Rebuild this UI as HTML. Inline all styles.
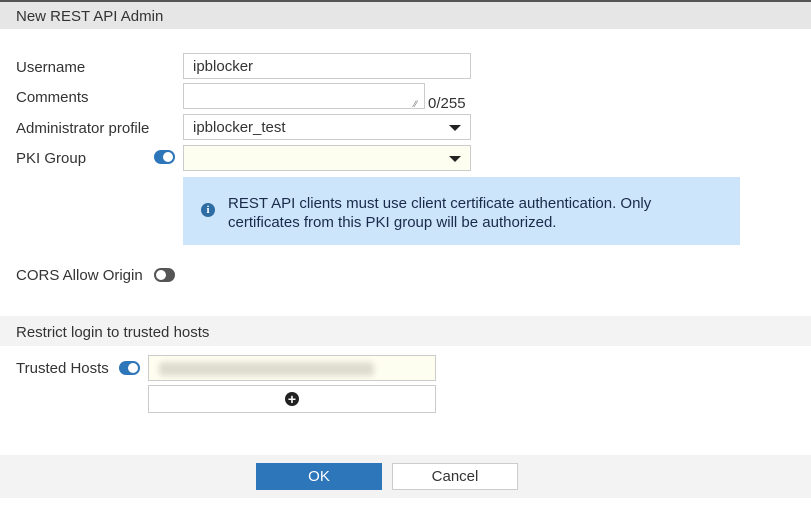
<!DOCTYPE html>
<html><head><meta charset="utf-8"><style>
*{box-sizing:border-box;margin:0;padding:0}
body{width:811px;height:531px;background:#fff;font-family:"Liberation Sans",sans-serif;font-size:15px;color:#333;position:relative;overflow:hidden}
.a{position:absolute}
.hdr{left:0;top:0;width:811px;height:29px;background:#e6e6e6;border-top:2px solid #555;padding:6px 16px;font-size:15px}
.lbl{left:16px}
.inp{border:1px solid #ccc;background:#fff;padding:4px 9px;font-size:15px;height:26px}
.tog{width:21px;height:14px;border-radius:7px;background:#2d76b9}
.tog::after{content:"";position:absolute;right:2px;top:2px;width:10px;height:10px;border-radius:50%;background:#fff}
.tog.off{background:#555}
.tog.off::after{right:auto;left:2px}
.caret{position:absolute;right:9px;top:10px;width:0;height:0;border-left:6px solid transparent;border-right:6px solid transparent;border-top:6px solid #222}
</style></head><body>
<div class="a hdr">New REST API Admin</div>

<div class="a lbl" style="top:59px">Username</div>
<div class="a inp" style="left:183px;top:53px;width:288px">ipblocker</div>

<div class="a lbl" style="top:89px">Comments</div>
<div class="a inp" style="left:183px;top:83px;width:242px"></div>
<div class="a" style="left:414px;top:99px;font-size:9px;color:#777">⁄⁄</div>
<div class="a" style="left:428px;top:95px">0/255</div>

<div class="a lbl" style="top:120px">Administrator profile</div>
<div class="a inp" style="left:183px;top:114px;width:288px">ipblocker_test<span class="caret"></span></div>

<div class="a lbl" style="top:150px">PKI Group</div>
<div class="a tog" style="left:154px;top:150px"></div>
<div class="a inp" style="left:183px;top:145px;width:288px;background:#fefef0"><span class="caret"></span></div>

<div class="a" style="left:183px;top:177px;width:557px;height:68px;background:#cce5fb;color:#1a2a4a;padding:17px 0 0 45px;line-height:19px">REST API clients must use client certificate authentication. Only<br>certificates from this PKI group will be authorized.</div>
<div class="a" style="left:201px;top:203px;width:14px;height:14px;border-radius:50%;background:#2e6da4;color:#fff;font-size:11px;font-weight:bold;text-align:center;line-height:14px;font-family:'Liberation Serif',serif">i</div>

<div class="a lbl" style="top:267px">CORS Allow Origin</div>
<div class="a tog off" style="left:154px;top:268px"></div>

<div class="a" style="left:0;top:316px;width:811px;height:30px;background:#f3f3f3;padding:8px 16px">Restrict login to trusted hosts</div>

<div class="a lbl" style="top:360px">Trusted Hosts</div>
<div class="a tog" style="left:119px;top:361px"></div>
<div class="a inp" style="left:148px;top:355px;width:288px;background:#fefef0"><div style="position:absolute;left:10px;top:6px;width:215px;height:14px;background:#dedcce;filter:blur(3px);border-radius:4px"></div></div>
<div class="a inp" style="left:148px;top:385px;width:288px;height:28px"></div>
<div class="a" style="left:285px;top:392px;width:14px;height:14px;border-radius:50%;background:#222;color:#fff;font-weight:bold;font-size:14px;text-align:center;line-height:14px">+</div>

<div class="a" style="left:0;top:455px;width:811px;height:43px;background:#f3f3f3"></div>
<div class="a" style="left:256px;top:463px;width:126px;height:27px;background:#2d76b9;color:#fff;text-align:center;line-height:28px">OK</div>
<div class="a" style="left:392px;top:463px;width:126px;height:27px;background:#fff;border:1px solid #ccc;text-align:center;line-height:26px">Cancel</div>
</body></html>
